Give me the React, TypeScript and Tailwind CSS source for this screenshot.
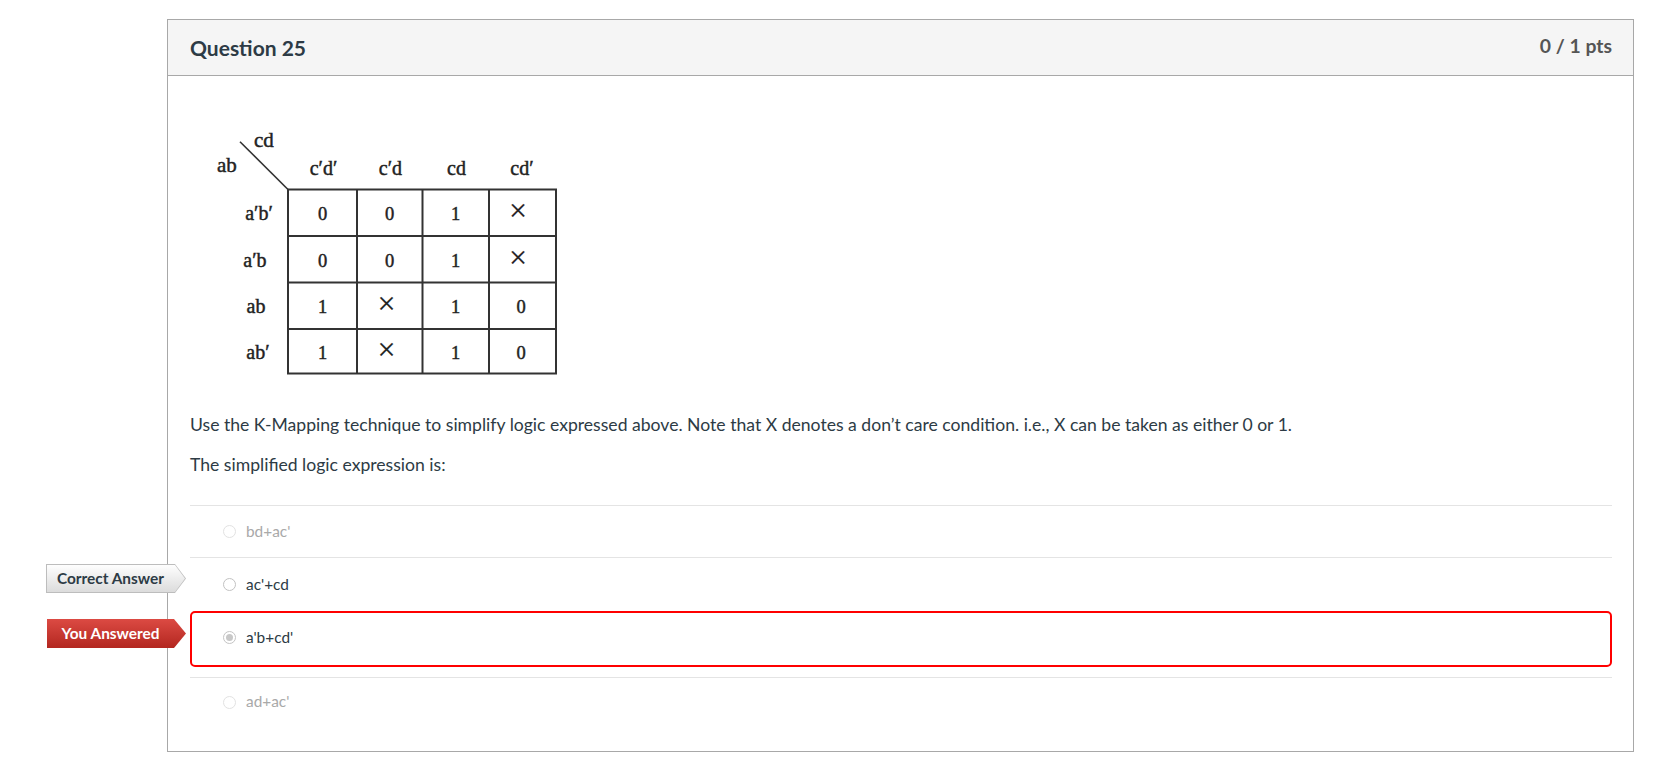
// Canvas-style quiz result card: question 25 (K-map), with answer arrows.
const INK = '#2d3b45'

const KMAP_ROWS: { label: string; x: number; y: number; cells: string[] }[] = [
  { label: 'a′b′', x: 69, y: 100, cells: ['0', '0', '1', '×'] },
  { label: 'a′b', x: 65, y: 146.5, cells: ['0', '0', '1', '×'] },
  { label: 'ab', x: 66, y: 192.5, cells: ['1', '×', '1', '0'] },
  { label: 'ab′', x: 68, y: 238.5, cells: ['1', '×', '1', '0'] },
]
const COL_X = [132.5, 199.5, 265.5, 331]
const COL_HEAD = ['c′d′', 'c′d', 'cd', 'cd′']

function KMap() {
  return (
    <svg width={380} height={262} viewBox="0 0 380 262" className="block">
      <g fontFamily="'Liberation Serif', 'DejaVu Serif', serif" fill="#222" stroke="#222" strokeWidth={0.45}>
        <text x={64} y={27} fontSize={21}>cd</text>
        <text x={27} y={51.5} fontSize={21}>ab</text>
        {COL_HEAD.map((h, i) => (
          <text key={h} x={COL_X[i] + 1} y={55} fontSize={20} textAnchor="middle">{h}</text>
        ))}
        {KMAP_ROWS.map((r) => (
          <g key={r.label}>
            <text x={r.x} y={r.y} fontSize={20} textAnchor="middle">{r.label}</text>
            {r.cells.map((c, i) =>
              c === '×' ? (
                <text key={i} x={COL_X[i] - 3} y={r.y + 1} fontSize={32} strokeWidth={0.2} textAnchor="middle">×</text>
              ) : (
                <text key={i} x={COL_X[i]} y={r.y} fontSize={18.5} textAnchor="middle">{c}</text>
              ),
            )}
          </g>
        ))}
      </g>
      <g stroke="#333" fill="none">
        <line x1={50} y1={21.7} x2={98} y2={69.5} strokeWidth={1.6} />
        <rect x={98} y={69.5} width={268} height={184} strokeWidth={2} />
        {[167, 232.5, 299].map((x) => (
          <line key={x} x1={x} y1={69.5} x2={x} y2={253.5} strokeWidth={2} />
        ))}
        {[116, 162.5, 209].map((y) => (
          <line key={y} x1={98} y1={y} x2={366} y2={y} strokeWidth={2} />
        ))}
      </g>
    </svg>
  )
}

function Radio({ state }: { state: 'faded' | 'open' | 'picked' }) {
  if (state === 'picked') {
    return (
      <span className="flex h-[13px] w-[13px] shrink-0 items-center justify-center rounded-full border border-[#c4c4c4] bg-white">
        <span className="h-[7px] w-[7px] rounded-full bg-[#c8c8c8]" />
      </span>
    )
  }
  return (
    <span
      className={
        state === 'faded'
          ? 'h-[13px] w-[13px] shrink-0 rounded-full border border-[#e2e2e2] bg-white'
          : 'h-[13px] w-[13px] shrink-0 rounded-full border border-[#c2c2c2] bg-white'
      }
    />
  )
}

function CorrectArrow() {
  return (
    <div className="absolute left-[-144px] top-[6px] h-[29px] w-[140px] bg-[#bdbdbd] [clip-path:polygon(0_0,129px_0,100%_50%,129px_100%,0_100%)]">
      <div className="absolute inset-[1px] flex items-center bg-gradient-to-b from-[#fefefe] to-[#dcdcdc] pr-[11px] [clip-path:polygon(0_0,128px_0,100%_50%,128px_100%,0_100%)]">
        <span className="w-[127px] text-center text-[15.4px] font-bold text-[#2d3b45]">Correct Answer</span>
      </div>
    </div>
  )
}

function WrongArrow() {
  return (
    <div className="absolute left-[-145px] top-[6px] flex h-[29px] w-[139px] items-center bg-gradient-to-b from-[#dc4a43] to-[#b3261f] [clip-path:polygon(0_0,127px_0,100%_50%,127px_100%,0_100%)]">
      <span className="w-[127px] text-center text-[15.4px] font-bold text-white">You Answered</span>
    </div>
  )
}

export default function App() {
  return (
    <div className="min-h-screen bg-white pl-[167px] pr-[37px] pt-[19px] font-[Lato,'Open_Sans',sans-serif]" style={{ color: INK }}>
      <div className="border border-[#a8a8a8]">
        <div className="flex h-[56px] items-center justify-between border-b border-[#a8a8a8] bg-[#f5f5f5] pl-[22px] pr-[21px]">
          <h2 className="text-[21px] font-bold">Question 25</h2>
          <span className="mb-[4px] text-[19.4px] font-bold text-[#555]">0 / 1 pts</span>
        </div>

        <div className="pb-[25px] pl-[22px] pr-[21px] pt-[44px]">
          <KMap />
          <p className="mt-[30px] text-[17.6px] leading-[26px]">
            Use the K-Mapping technique to simplify logic expressed above. Note that X denotes a don’t care
            condition. i.e., X can be taken as either 0 or 1.
          </p>
          <p className="mt-[14px] text-[17.6px] leading-[26px]">The simplified logic expression is:</p>

          <div className="mt-[27px] text-[15.4px]">
            <div className="flex h-[52px] items-center gap-[10px] border-t border-[#e4e4e4] pl-[33px] text-[#a9a9a9]">
              <Radio state="faded" />
              <span>bd+ac'</span>
            </div>
            <div className="relative flex h-[54px] items-center gap-[10px] border-t border-[#e4e4e4] pl-[33px]">
              <CorrectArrow />
              <Radio state="open" />
              <span>ac'+cd</span>
            </div>
            <div className="relative flex h-[56px] items-center gap-[10px] rounded-[5px] border-2 border-[#ff0000] pb-[3px] pl-[31px]">
              <WrongArrow />
              <Radio state="picked" />
              <span>a'b+cd'</span>
            </div>
            <div className="mt-[10px] flex h-[49px] items-center gap-[10px] border-t border-[#e4e4e4] pl-[33px] text-[#a9a9a9]">
              <Radio state="faded" />
              <span>ad+ac'</span>
            </div>
          </div>
        </div>
      </div>
    </div>
  )
}
